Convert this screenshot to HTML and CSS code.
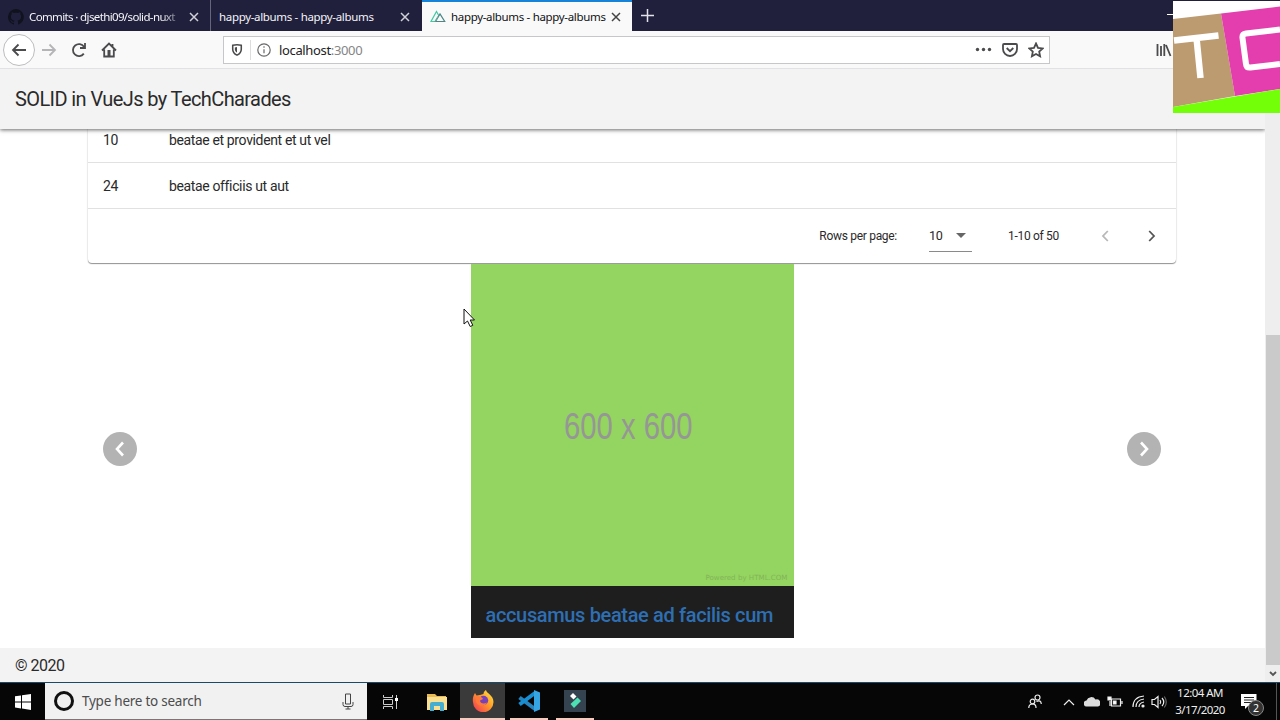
FILE: index.html
```html
<!DOCTYPE html>
<html lang="en">
<head>
  <meta charset="UTF-8">
  <meta name="viewport" content="width=device-width, initial-scale=1.0">
  <title>happy-albums - happy-albums</title>
  <link rel="stylesheet" href="styles.css">
</head>
<body>
  <!-- browser tabs -->
  <div class="tabs">
    <div class="tab tab-first">
      <svg class="favicon" width="16" height="16" viewBox="0 0 16 16"><path fill="#10131d" d="M8 0a8 8 0 0 0-2.5 15.6c.4 0 .5-.2.5-.4v-1.5c-2.2.5-2.7-1-2.7-1-.4-.9-.9-1.2-.9-1.2-.7-.5.1-.5.1-.5.8.1 1.2.8 1.2.8.7 1.3 1.9.9 2.4.7 0-.5.3-.9.5-1.1-1.8-.2-3.7-.9-3.7-4 0-.9.3-1.6.8-2.1 0-.2-.3-1 .1-2.1 0 0 .7-.2 2.2.8a8 8 0 0 1 4 0c1.5-1 2.2-.8 2.2-.8.4 1.1.1 1.9.1 2.1.5.6.8 1.3.8 2.1 0 3.1-1.9 3.8-3.7 4 .3.3.6.8.6 1.5v2.2c0 .2.1.5.6.4A8 8 0 0 0 8 0z"/></svg>
      <span class="tab-title fade">Commits · djsethi09/solid-nuxt</span>
      <svg class="close" width="10" height="10" viewBox="0 0 10 10"><path d="M1 1l8 8M9 1L1 9"/></svg>
    </div>
    <div class="tab tab-second">
      <span class="tab-title">happy-albums - happy-albums</span>
      <svg class="close" width="10" height="10" viewBox="0 0 10 10"><path d="M1 1l8 8M9 1L1 9"/></svg>
    </div>
    <div class="tab tab-active">
      <svg class="nuxt" width="16" height="13" viewBox="0 0 16 13" fill="none" stroke-width="1.2"><path stroke="#41c9a0" d="M5 11.500H1L6.500 1.500 9 6"/><path stroke="#4f8585" d="M5.500 11.500L10 4l4.700 7.500z"/><path stroke="#69a99b" d="M5 11.500l3-5"/></svg>
      <span class="tab-title">happy-albums - happy-albums</span>
      <svg class="close" width="10" height="10" viewBox="0 0 10 10"><path d="M1 1l8 8M9 1L1 9"/></svg>
    </div>
    <svg class="new-tab" width="13" height="13" viewBox="0 0 13 13"><path d="M6.500 0v13M0 6.500h13"/></svg>
    <span class="minimize"></span>
  </div>

  <!-- address bar -->
  <div class="navbar">
    <div class="nav-buttons">
      <span class="back"><svg width="16" height="14" viewBox="0 0 16 14"><path d="M15 7H2M7.500 1.500L2 7l5.500 5.500"/></svg></span>
      <svg class="forward" width="16" height="14" viewBox="0 0 16 14"><path d="M1 7h13M8.500 1.500L14 7l-5.500 5.500"/></svg>
      <svg width="16" height="16" viewBox="0 0 16 16"><path d="M12.800 11.600A6 6 0 1 1 13 4.800M14 1v5H9"/></svg>
      <svg width="16" height="16" viewBox="0 0 16 16"><path d="M1 8.500L8 1.500l7 7M3.200 7.500V14.500h9.600V7.500M11.500 2v3"/><path class="solid" d="M6.500 8h3v7h-3z"/></svg>
    </div>
    <div class="urlbar">
      <svg width="12" height="14" viewBox="0 0 14 14"><path d="M2 1.500c3-.8 7-.8 10 0V6c0 3-2 5.500-5 7-3-1.500-5-4-5-7z"/><path class="solid" d="M4.500 4L7 3.500V10C5.200 9 4.500 7.500 4.500 6z"/></svg>
      <span class="divider"></span>
      <svg class="thin" width="14" height="14" viewBox="0 0 14 14"><circle cx="7" cy="7" r="6.200"/><path d="M7 6.200v4M7 3.300v1.400"/></svg>
      <span class="url">localhost<span class="port">:3000</span></span>
      <svg class="dots" width="17" height="5" viewBox="0 0 17 5"><circle cx="2.500" cy="2.500" r="1.700"/><circle cx="8.500" cy="2.500" r="1.700"/><circle cx="14.500" cy="2.500" r="1.700"/></svg>
      <svg width="16" height="14" viewBox="0 0 16 14"><path d="M2 1h12q1 0 1 1v4a7 7 0 0 1-14 0V2q0-1 1-1zM4.700 5L8 8.200 11.300 5"/></svg>
      <svg class="star" width="16" height="16" viewBox="0 0 16 16"><path d="M8 1.500l2 4.300 4.700.6-3.500 3.200.9 4.700L8 12l-4.100 2.300.9-4.700L1.300 6.400 6 5.800z"/></svg>
    </div>
    <svg class="library" width="16" height="14" viewBox="0 0 16 14"><path d="M1.500 1v12M5 3v10M8.300 1v12M10 2l4.500 11"/></svg>
  </div>

  <div class="viewport">
    <div class="page">
      <header class="app-bar">SOLID in VueJs by TechCharades</header>
      <main>
        <div class="table-card">
          <div class="row"><span class="id">10</span><span>beatae et provident et ut vel</span></div>
          <div class="row"><span class="id">24</span><span>beatae officiis ut aut</span></div>
          <div class="table-footer">
            <span class="rows-label">Rows per page:</span>
            <div class="select"><span>10</span><span class="caret"></span></div>
            <span class="range">1-10 of 50</span>
            <svg class="prev" width="8" height="12" viewBox="0 0 8 12"><path d="M6.800 1L2 6l4.800 5"/></svg>
            <svg class="next" width="8" height="12" viewBox="0 0 8 12"><path d="M1.200 1L6 6l-4.800 5"/></svg>
          </div>
        </div>
        <div class="carousel">
          <button class="arrow"><svg width="12" height="18" viewBox="0 0 12 18"><path d="M9 2.500L3 9l6 6.500"/></svg></button>
          <div class="photo">
            <div class="picture">
              <span class="size">600 x 600</span>
              <span class="credit">Powered by HTML.COM</span>
            </div>
            <div class="caption">accusamus beatae ad facilis cum</div>
          </div>
          <button class="arrow"><svg width="12" height="18" viewBox="0 0 12 18"><path d="M3 2.500L9 9l-6 6.500"/></svg></button>
        </div>
      </main>
      <footer>© 2020</footer>
    </div>
    <div class="scrollbar">
      <div class="thumb"></div>
      <svg width="8" height="6" viewBox="0 0 8 6"><path d="M1 1l3 3 3-3"/></svg>
    </div>
  </div>

  <!-- windows taskbar -->
  <div class="taskbar">
    <div class="start"><svg width="16" height="16" viewBox="0 0 16 16"><path fill="#fff" d="M0 2.300L6 1.500V7.500H0zM7 1.300L16 0V7.500H7zM0 8.500H6V14.400L0 13.600zM7 8.500H16V16L7 14.600z"/></svg></div>
    <div class="search">
      <span class="cortana"></span>
      <span class="search-text">Type here to search</span>
      <svg width="12" height="17" viewBox="0 0 12 17"><path d="M3.500 1h5v10h-5zM1 9v2.500q0 2 2 2h6q2 0 2-2V9M6 13.500v2.500M3.500 16h5"/></svg>
    </div>
    <div class="apps">
      <div class="app"><svg width="18" height="16" viewBox="0 0 18 16" fill="none" stroke="#ccc"><path d="M1.500 1v2.500h9V1M1.500 15v-2.500h9V15M1.500 5.500h9v5h-9zM14.500 1v14"/><path fill="#fff" stroke="none" d="M13 4h3v3h-3z"/></svg></div>
      <div class="app"><svg width="22" height="18" viewBox="0 0 22 18"><path fill="#e9ba51" d="M1 1h8l2 2h9v4H1z"/><path fill="#f8df91" d="M1 4h20v13H1z"/><path fill="#45add0" d="M4 11q0-2 2-2h10q2 0 2 2v7h-4v-5H8v5H4z"/></svg></div>
      <div class="app active">
        <svg width="22" height="22" viewBox="0 0 22 22">
          <defs><linearGradient id="fox" x1="1" y1="0" x2="0" y2="1"><stop offset="0" stop-color="#fff047"/><stop offset=".45" stop-color="#ff9a28"/><stop offset="1" stop-color="#f02c5d"/></linearGradient></defs>
          <path fill="url(#fox)" d="M14 0c0 3 7.500 5 7.500 12A10 10 0 0 1 1 12C.5 9 1 6 3 3l1.500 2.500L8 5l3.500-1c0-2 1-3 2.500-4z"/>
          <circle cx="11.500" cy="10.500" r="4.700" fill="#7642b9"/>
          <path fill="#ff7a3a" d="M4 6.500c3-.5 6 .5 7 2.500l-3 1.500c0 3 4 4 7 2-1 4-9 5-11-1z"/>
        </svg>
      </div>
      <div class="app open"><svg width="24" height="24" viewBox="0 0 24 24"><path fill="none" stroke="#2583bd" stroke-width="4" d="M2.500 8.500L18 20"/><path fill="none" stroke="#188fd2" stroke-width="4" d="M2.500 15.500L18 4"/><path fill="#35a5e4" d="M17 1l6 2.500v17L17 23z"/></svg></div>
      <div class="app open"><svg width="22" height="22" viewBox="0 0 22 22"><path fill="#34434f" d="M0 0h22v22H0z"/><path fill="#fff" d="M9 3l3.500 3.500-3 3L6 6z"/><path fill="#4ce0b4" d="M13.500 7.500L17 11l-7 7-3.500-4z"/></svg></div>
    </div>
    <div class="tray">
      <svg class="people" width="14" height="15" viewBox="0 0 14 15"><circle cx="9.500" cy="3.500" r="2.500"/><circle cx="4.500" cy="7.500" r="2.300"/><path d="M.8 14q0-4 3.700-4T8 14M8.500 7.500Q13 5.500 13.300 10"/></svg>
      <svg class="chevron" width="12" height="8" viewBox="0 0 12 8"><path d="M1 7l5-5 5 5"/></svg>
      <svg class="cloud" width="16" height="11" viewBox="0 0 16 11"><path fill="#ddd" stroke="none" d="M3 10.500a3 3 0 0 1-.5-6A5 5 0 0 1 11.500 3.500 3.500 3.500 0 0 1 14 10.500z"/></svg>
      <svg class="battery" width="16" height="12" viewBox="0 0 16 12"><path d="M4.500 3h9v7h-9zM15 5v3M3 5v5"/><path fill="#fff" d="M6.500 5H9v3H6.500zM1 1h3v3H1z"/></svg>
      <svg class="wifi" width="13" height="13" viewBox="0 0 13 13"><path d="M1 12Q1 2 12 1M4 12Q4 5 12 4M7 12Q7 8 12 7"/><circle cx="11" cy="11" r="1" fill="#fff"/></svg>
      <svg class="volume" width="16" height="14" viewBox="0 0 16 14"><path d="M1 4.500h2.500L7 1.500v11L3.500 9.500H1zM9 5q1.500 2 0 4M11 3q3.500 4 0 8"/><path stroke="#666" d="M13.300 1.500q4 5.500 0 11"/></svg>
      <div class="clock"><span>12:04 AM</span><span>3/17/2020</span></div>
      <div class="notify">
        <svg width="16" height="16" viewBox="0 0 16 16"><path fill="#fff" stroke="none" d="M0 0h15.500v12H7l-3 3v-3H0z"/><path stroke="#222" d="M3 3.500h10M3 6h10M3 8.500h7"/></svg>
        <span class="count">2</span>
      </div>
      <span class="show-desktop"></span>
    </div>
  </div>

  <!-- channel logo over the window corner -->
  <svg class="logo" width="107" height="112" viewBox="0 0 107 112">
    <path fill="#fff" d="M0 0h107v112H0z"/>
    <path fill="#bc9b70" d="M0 18L48 12.500 62 95 0 106z"/>
    <path fill="#e43eae" d="M48 12.500L107 5.500V88L62 95z"/>
    <path fill="#73ff08" d="M0 106L107 88v24H0z"/>
    <path fill="none" stroke="#fff" stroke-width="6.500" d="M1 39.500L45.500 34.500M23.500 37L27.500 77"/>
    <path fill="none" stroke="#fff" stroke-width="6" d="M107 28.500L73 32.500q-4 .5-3.500 4.500L73 63q.5 4 4.500 3.500L107 63"/>
  </svg>

  <svg class="cursor" width="13" height="20" viewBox="0 0 13 20"><path fill="#fff" stroke="#111" d="M1 1v15l3.500-3 2.700 5.500 2.600-1.200L7.200 12H11.500z"/></svg>
</body>
</html>
```

FILE: styles.css
```css
* {
  box-sizing: border-box;
}

body {
  margin: 0;
  width: 1280px;
  height: 720px;
  overflow: hidden;
  position: relative;
  display: flex;
  flex-direction: column;
  font-family: Roboto, sans-serif;
  background: #fff;
  color: #2a2a2a;
  white-space: nowrap;
}

svg {
  display: block;
  flex: none;
}

/* tabs */
.tabs {
  height: 31px;
  flex: none;
  display: flex;
  background: #20203c;
  font-family: "Noto Sans", sans-serif;
  font-size: 11.5px;
  color: #f4f4f8;
}

.tab {
  display: flex;
  align-items: center;
  height: 31px;
  padding-top: 2px;
}

.tab-first {
  width: 211px;
  padding-left: 8px;
  border-right: 1px solid #66667a;
}

.tab-second {
  width: 211px;
  padding-left: 8px;
}

.tab-active {
  width: 210px;
  padding-left: 8px;
  background: #f9f9fa;
  border-top: 2px solid #1683d8;
  color: #111;
  padding-top: 0;
}

.tab-title {
  width: 155px;
  letter-spacing: -0.33px;
}

.fade {
  width: 153px;
  margin-left: 5px;
  letter-spacing: -0.63px;
  -webkit-mask-image: linear-gradient(to right, #000 86%, rgba(0, 0, 0, 0.15));
  mask-image: linear-gradient(to right, #000 86%, rgba(0, 0, 0, 0.15));
}

.close {
  fill: none;
  stroke: #d0d0d8;
  stroke-width: 1.5;
  margin-left: 7px;
}

.tab-second .close {
  margin-left: 26px;
}

.tab-active .close {
  stroke: #444;
  margin-left: 5px;
}

.nuxt {
  margin-right: 5px;
}

.new-tab {
  margin: 9px 0 0 9px;
  stroke: #e2e2ea;
  stroke-width: 1.5;
}

.minimize {
  width: 10px;
  height: 1px;
  margin: 14px 0 0 513px;
  background: #fff;
}

/* address bar */
.navbar {
  height: 38px;
  flex: none;
  display: flex;
  align-items: center;
  background: #f9f9fa;
  border-bottom: 1px solid #e2e2e4;
}

.navbar svg {
  fill: none;
  stroke: #4b4b4d;
  stroke-width: 1.8;
}

.navbar .solid {
  fill: #4b4b4d;
  stroke: none;
}

.nav-buttons {
  width: 223px;
  padding-left: 3px;
  display: flex;
  align-items: center;
  gap: 14px;
}

.back {
  width: 32px;
  height: 32px;
  margin-right: -8px;
  border: 1px solid #bdbdbf;
  border-radius: 50%;
  background: #fff;
  display: flex;
  align-items: center;
  justify-content: center;
}

.navbar .forward {
  stroke: #b5b5b7;
}

.urlbar {
  width: 827px;
  height: 28px;
  padding: 0 5px 0 7px;
  display: flex;
  align-items: center;
  background: #fff;
  border: 1px solid #c7c7c9;
}

.navbar .thin {
  stroke: #68686a;
  stroke-width: 1.2;
}

.divider {
  width: 1px;
  height: 20px;
  background: #ddd;
  margin: 0 6px 0 7px;
}

.url {
  flex: 1;
  margin-left: 8px;
  font-family: "Noto Sans", sans-serif;
  font-size: 13px;
  letter-spacing: -0.35px;
  color: #222;
}

.port {
  color: #858585;
}

.navbar .dots {
  fill: #4b4b4d;
  stroke: none;
  margin-right: 10px;
}

.star {
  margin-left: 10px;
}

.library {
  margin-left: 106px;
}

/* page */
.viewport {
  height: 613px;
  flex: none;
  display: flex;
}

.page {
  width: 1265px;
  display: flex;
  flex-direction: column;
  overflow: hidden;
}

.app-bar {
  height: 60px;
  flex: none;
  z-index: 1;
  padding-left: 15px;
  line-height: 60px;
  font-size: 20px;
  letter-spacing: -0.6px;
  background: #f3f3f3;
  box-shadow: 0 1px 4px rgba(0, 0, 0, 0.6);
}

main {
  height: 519px;
  padding: 0 89px 0 88px;
}

.table-card {
  margin-top: -12px;
  border-radius: 4px;
  box-shadow: 0 1px 1px rgba(0, 0, 0, 0.4), 0 0 2px rgba(0, 0, 0, 0.15);
}

.row {
  height: 46px;
  padding-left: 15px;
  display: flex;
  align-items: center;
  font-size: 14px;
  letter-spacing: -0.36px;
  border-bottom: 1px solid #e1e1e1;
}

.id {
  width: 66px;
}

.table-footer {
  height: 54px;
  padding-right: 20px;
  display: flex;
  align-items: center;
  justify-content: flex-end;
  font-size: 12px;
  letter-spacing: -0.3px;
}

.select {
  width: 43px;
  height: 31px;
  margin-left: 32px;
  padding-right: 6px;
  display: flex;
  align-items: center;
  justify-content: space-between;
  border-bottom: 1px solid #8a8a8a;
  font-size: 12.6px;
}

.caret {
  border: 5px solid transparent;
  border-top-color: #666;
  border-bottom: 0;
}

.range {
  margin-left: 36px;
}

.table-footer svg {
  fill: none;
  stroke: #555;
  stroke-width: 1.8;
}

.table-footer .prev {
  margin-left: 42px;
  stroke: #b8b8b8;
}

.next {
  margin-left: 39px;
}

/* carousel */
.carousel {
  height: 384px;
  padding: 1px 15px 0;
  display: flex;
  justify-content: space-between;
}

.arrow {
  width: 34px;
  height: 34px;
  margin-top: 168px;
  padding: 0;
  border: 0;
  border-radius: 50%;
  background: #b3b3b3;
  display: flex;
  align-items: center;
  justify-content: center;
}

.arrow svg {
  fill: none;
  stroke: #fff;
  stroke-width: 2.6;
}

.photo {
  width: 323px;
  height: 374px;
  background: #1e1e1e;
}

.picture {
  height: 322px;
  position: relative;
  display: flex;
  align-items: center;
  justify-content: center;
  background: #94d460;
}

.size {
  padding-top: 3px;
  font-family: "Liberation Sans", Arial, sans-serif;
  font-size: 37px;
  color: #969696;
  transform: translateX(-4px) scaleX(0.79);
}

.credit {
  position: absolute;
  right: 6px;
  bottom: 4px;
  font-family: "DejaVu Sans", sans-serif;
  font-size: 7.1px;
  color: #82b459;
}

.caption {
  padding-left: 15px;
  line-height: 59px;
  height: 52px;
  font-size: 20px;
  letter-spacing: -0.35px;
  font-weight: 500;
  color: #2e6fb4;
}

footer {
  height: 34px;
  padding-left: 15px;
  line-height: 35px;
  font-size: 16px;
  letter-spacing: -0.5px;
  background: #f3f3f3;
}

.scrollbar {
  width: 15px;
  background: #eee;
  display: flex;
  flex-direction: column;
  align-items: center;
  padding-top: 266px;
}

.thumb {
  width: 14px;
  height: 330px;
  background: #cacaca;
}

.scrollbar svg {
  margin-top: 6px;
  fill: none;
  stroke: #555;
  stroke-width: 1.8;
}

/* taskbar */
.taskbar {
  height: 38px;
  flex: none;
  display: flex;
  background: #060606;
  border-top: 1px solid #174b68;
  font-family: "Noto Sans", sans-serif;
}

.start {
  width: 45px;
  display: flex;
  align-items: center;
  justify-content: center;
}

.search {
  width: 322px;
  padding: 0 13px 0 9px;
  display: flex;
  align-items: center;
  background: #f1f1f1;
  border-bottom: 1px solid #777;
}

.cortana {
  width: 20px;
  height: 20px;
  border: 3px solid #111;
  border-radius: 50%;
}

.search-text {
  flex: 1;
  margin-left: 8px;
  font-size: 13.5px;
  letter-spacing: -0.25px;
  color: #4c4c4c;
}

.search svg {
  fill: none;
  stroke: #444;
}

.apps {
  display: flex;
}

.app {
  width: 46px;
  display: flex;
  align-items: center;
  justify-content: center;
}

.app:first-child {
  width: 47px;
}

.active {
  width: 45px;
  background: #3a3a3a;
  border-bottom: 2px solid #f4cbbd;
}

.open {
  width: 38px;
  margin-left: 5px;
  border-bottom: 2px solid #f4cbbd;
}

.open + .open {
  margin-left: 8px;
}

.tray {
  flex: 1;
  display: flex;
  align-items: center;
  color: #eee;
}

.tray svg {
  fill: none;
  stroke: #eee;
  stroke-width: 1.2;
}

.people {
  margin-left: 434px;
}

.chevron {
  margin-left: 21px;
}

.cloud {
  margin-left: 9px;
}

.battery {
  margin-left: 7px;
}

.wifi {
  margin-left: 9px;
}

.volume {
  margin-left: 6px;
}

.clock {
  width: 66px;
  margin-left: 0;
  display: flex;
  flex-direction: column;
  align-items: center;
  font-size: 11.5px;
  line-height: 17px;
  letter-spacing: -0.55px;
  padding-bottom: 2px;
}

.notify {
  position: relative;
  margin-left: 8px;
}

.count {
  position: absolute;
  left: 7px;
  top: 6px;
  width: 16px;
  height: 16px;
  border: 1px solid #888;
  border-radius: 50%;
  background: #333;
  color: #fff;
  font-size: 10.5px;
  line-height: 14px;
  text-align: center;
}

.show-desktop {
  width: 1px;
  height: 37px;
  margin-left: 19px;
  background: #555;
}

/* overlays */
.logo {
  position: absolute;
  left: 1173px;
  top: 1px;
  z-index: 2;
}

.cursor {
  position: absolute;
  left: 463px;
  top: 308px;
}
```
